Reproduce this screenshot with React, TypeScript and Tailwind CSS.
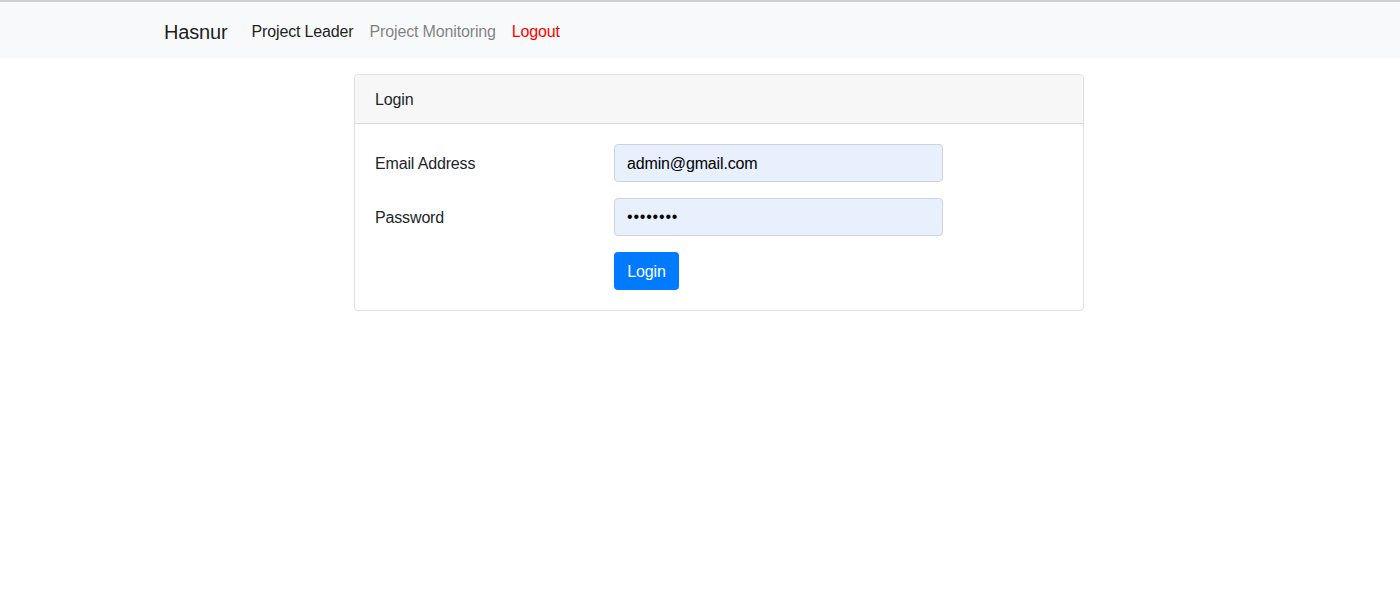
import React from "react";

export default function App() {
  const font = { fontFamily: '"Segoe UI", "Liberation Sans", Arial, sans-serif' };
  return (
    <div className="min-h-[613px] bg-white text-[16px] tracking-[-0.15px] text-[#212529]" style={font}>
      <div className="border-t-2 border-[#cfcfcf] bg-[#f8f9fa]">
        <nav className="flex h-[56px] items-center pt-[3px] pl-[164px]">
          <span className="mr-[16px] text-[20px] leading-[30px] text-[rgba(0,0,0,0.9)]">Hasnur</span>
          <a className="px-[8px] leading-[24px] text-[rgba(0,0,0,0.9)]">Project Leader</a>
          <a className="px-[8px] leading-[24px] text-[rgba(0,0,0,0.5)]">Project Monitoring</a>
          <a className="px-[8px] leading-[24px] text-[#ff0000]">Logout</a>
        </nav>
      </div>
      <div className="pt-[16px] pl-[354px]">
        <div className="w-[730px] rounded-[4px] border border-[rgba(0,0,0,0.125)]">
          <div className="h-[49px] rounded-t-[3px] border-b border-[rgba(0,0,0,0.125)] bg-[#f7f7f7] px-[20px] pt-[1px] leading-[48px]">
            Login
          </div>
          <div className="flex flex-col gap-[16px] p-[20px]">
            <div className="flex items-center">
              <label className="w-[239px] pt-[2px] leading-[24px]">Email Address</label>
              <div className="flex h-[38px] w-[329px] items-center rounded-[4px] border border-[#ced4da] bg-[#e8f0fe] px-[12px] pt-[2px] text-[#000]">
                admin@gmail.com
              </div>
            </div>
            <div className="flex items-center">
              <label className="w-[239px] pt-[2px] leading-[24px]">Password</label>
              <div className="flex h-[38px] w-[329px] items-center rounded-[4px] border border-[#ced4da] bg-[#e8f0fe] px-[12px] text-[16px] tracking-[0.8px] text-[#000]">
                ••••••••
              </div>
            </div>
            <div className="flex">
              <div className="w-[239px]" />
              <button className="h-[38px] w-[65px] rounded-[4px] bg-[#007bff] pt-[2px] text-white">Login</button>
            </div>
          </div>
        </div>
      </div>
    </div>
  );
}
